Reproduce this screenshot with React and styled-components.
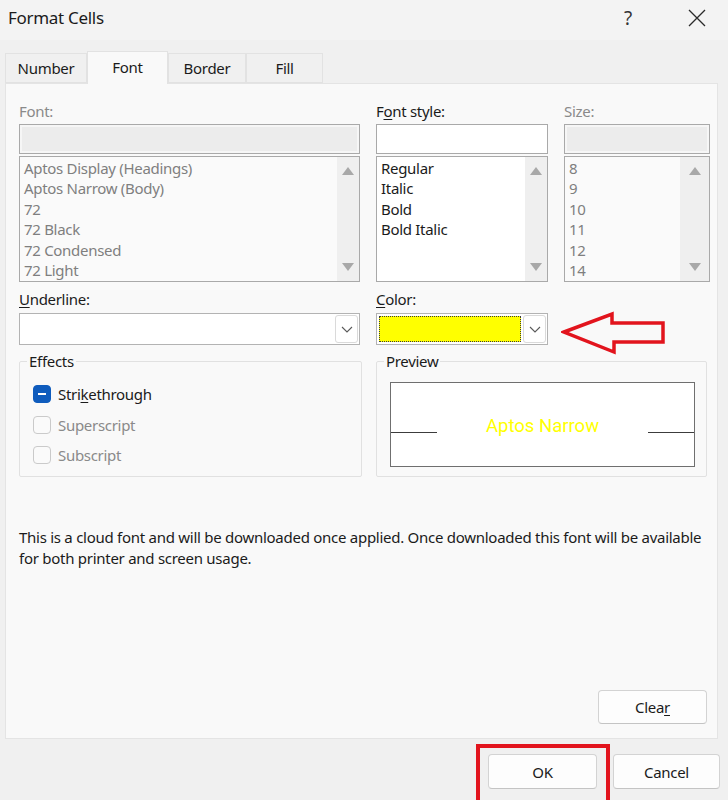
import styled, { createGlobalStyle } from "styled-components";

const GlobalStyle = createGlobalStyle`
  html, body {
    margin: 0;
    padding: 0;
    background: #f0f0f0;
  }
  body {
    font-family: "Noto Sans", "Open Sans", sans-serif;
    color: #1b1b1b;
  }
`;

const Dialog = styled.div`
  width: 728px;
  height: 800px;
  overflow: hidden;
  display: flex;
  flex-direction: column;
  background: #f0f0f0;
  font-size: 15px;
  letter-spacing: -0.3px;
`;

const TitleBar = styled.div`
  height: 40px;
  display: flex;
  align-items: flex-start;
  padding-left: 8px;
  background: #f3f3f3;
`;

const Title = styled.div`
  flex: 1;
  font-size: 17px;
  line-height: 24px;
  margin-top: 6px;
`;

const TitleButton = styled.div`
  width: 46px;
  height: 36px;
  display: flex;
  align-items: center;
  justify-content: center;
  font-size: 19px;
  color: #333;
  margin-right: ${(p) => p.$gap || 0}px;
`;

const TabStrip = styled.div`
  height: 43px;
  box-sizing: border-box;
  display: flex;
  align-items: flex-end;
  padding-left: 5px;
  position: relative;
  z-index: 1;
`;

const Tab = styled.div`
  width: ${(p) => p.$w}px;
  height: ${(p) => (p.$active ? 33 : 30)}px;
  box-sizing: border-box;
  display: flex;
  align-items: center;
  justify-content: center;
  padding-bottom: ${(p) => (p.$active ? 2 : 0)}px;
  background: ${(p) => (p.$active ? "#f9f9f9" : "#f0f0f0")};
  border: 1px solid #e2e2e2;
  border-bottom: ${(p) => (p.$active ? "none" : "1px solid #e2e2e2")};
  margin-bottom: ${(p) => (p.$active ? -1 : 0)}px;
  font-size: 15px;
`;

const Panel = styled.div`
  position: relative;
  flex: 1;
  margin: 0 10px 0 5px;
  background: #f9f9f9;
  border: 1px solid #e4e4e4;
  padding: 17px 8px 14px 13px;
  display: flex;
  flex-direction: column;
`;

const FormGrid = styled.div`
  display: grid;
  grid-template-columns: 341px 172px 146px;
  column-gap: 16px;
`;

const Label = styled.div`
  height: 20px;
  line-height: 20px;
  margin: ${(p) => (p.$top ? 7 : 0)}px 0 ${(p) => (p.$top ? 4 : 3)}px;
  color: ${(p) => (p.$disabled ? "#8a8a8a" : "#1b1b1b")};

  u {
    text-decoration-thickness: 1px;
    text-underline-offset: 2px;
  }
`;

const TextBox = styled.div`
  height: 30px;
  box-sizing: border-box;
  border: 1px solid #a9a9a9;
  background: ${(p) => (p.$disabled ? "#ececec" : "#ffffff")};
  box-shadow: ${(p) => (p.$disabled ? "inset 0 0 0 2px #f6f6f6" : "none")};
`;

const ListBox = styled.div`
  height: 126px;
  margin-top: 2px;
  box-sizing: border-box;
  border: 1px solid #a9a9a9;
  background: ${(p) => (p.$disabled ? "#fafafa" : "#ffffff")};
  display: flex;
  overflow: hidden;
`;

const ListItems = styled.div`
  flex: 1;
  padding: 1px 4px;
  color: ${(p) => (p.$disabled ? "#7f7f7f" : "#1b1b1b")};
`;

const ListItem = styled.div`
  height: 20.4px;
  line-height: 20.4px;
  white-space: nowrap;
`;

const ScrollTrack = styled.div`
  width: ${(p) => p.$w || 22}px;
  background: #efefef;
  display: flex;
  flex-direction: column;
  justify-content: space-between;
  align-items: center;
  padding: 10px 0;
`;

const Arrow = styled.span`
  width: 0;
  height: 0;
  border-left: 6px solid transparent;
  border-right: 6px solid transparent;
  border-${(p) => (p.$down ? "top" : "bottom")}: 8px solid #a8a8a8;
`;

const Combo = styled.div`
  height: 32px;
  box-sizing: border-box;
  border: 1px solid #b3b3b3;
  background: #ffffff;
  padding: 1px;
  display: flex;
  gap: 2px;
`;

const ComboValue = styled.div`
  flex: 1;
  background: ${(p) => p.$swatch || "transparent"};
  outline: ${(p) => (p.$swatch ? "1px dotted #3a3a3a" : "none")};
  outline-offset: -1px;
  margin: ${(p) => (p.$swatch ? "1px 0 1px 1px" : "0")};
`;

const DropButton = styled.div`
  width: 23px;
  box-sizing: border-box;
  border: 1px solid #dadada;
  border-radius: 3px;
  background: #ffffff;
  display: flex;
  align-items: center;
  justify-content: center;
`;

const Group = styled.fieldset`
  grid-column: ${(p) => p.$span || "auto"};
  margin: 6px ${(p) => p.$right || 0}px 0 0;
  width: ${(p) => p.$w || "auto"};
  box-sizing: border-box;
  height: 126px;
  border: 1px solid #e1e1e1;
  border-radius: 2px;
  padding: ${(p) => p.$pad};
  min-width: 0;

  legend {
    margin-left: -6px;
    padding: 0 2px;
    line-height: 20px;
    font-size: 15px;
  }
`;

const CheckRow = styled.div`
  height: 30.5px;
  display: flex;
  align-items: center;
  gap: 7px;
  color: ${(p) => (p.$disabled ? "#8a8a8a" : "#1b1b1b")};

  u {
    text-decoration-thickness: 1px;
    text-underline-offset: 2px;
  }
`;

const CheckBox = styled.span`
  width: 18px;
  height: 18px;
  box-sizing: border-box;
  border-radius: 4px;
  border: 1px solid ${(p) => (p.$checked ? "#0f5cbd" : "#cacaca")};
  background: ${(p) => (p.$checked ? "#0f5cbd" : "#fafafa")};
  display: flex;
  align-items: center;
  justify-content: center;

  &::after {
    content: "";
    display: ${(p) => (p.$checked ? "block" : "none")};
    width: 8px;
    height: 2px;
    background: #ffffff;
  }
`;

const PreviewBox = styled.div`
  height: 85px;
  box-sizing: border-box;
  border: 1px solid #6f6f6f;
  background: #ffffff;
  display: flex;
`;

const PreviewLine = styled.div`
  width: 46px;
  height: 1px;
  margin-top: 49px;
  background: #3c3c3c;
`;

const PreviewText = styled.div`
  flex: 1;
  display: flex;
  align-items: center;
  justify-content: center;
  padding-top: 2px;
  color: #ffff00;
  font-family: "Roboto", "Noto Sans", sans-serif;
  font-size: 18.5px;
  letter-spacing: 0;
`;

const Info = styled.div`
  margin-top: 50px;
  line-height: 21px;
  letter-spacing: -0.27px;

  span {
    display: block;
    white-space: nowrap;
  }
`;

const Button = styled.div`
  width: ${(p) => p.$w || 109}px;
  height: ${(p) => p.$h || 35}px;
  box-sizing: border-box;
  border: 1px solid #d3d3d3;
  border-bottom-color: #c4c4c4;
  border-radius: 4px;
  background: #fdfdfd;
  display: flex;
  align-items: center;
  justify-content: center;
  font-size: 15px;

  u {
    text-decoration-thickness: 1px;
    text-underline-offset: 2px;
  }
`;

const ClearButton = styled(Button)`
  align-self: flex-end;
  margin-top: auto;
  margin-right: 2px;
`;

const Footer = styled.div`
  height: 61px;
  flex-shrink: 0;
  box-sizing: border-box;
  padding: 5px 8px 0 0;
  display: flex;
  justify-content: flex-end;
  align-items: flex-start;
`;

const Highlight = styled.div`
  border: 4px solid #e2141d;
  padding: 6px 9px 20px 8px;
`;

const CancelButton = styled(Button)`
  margin: 10px 0 0 3px;
`;

const Annotation = styled.svg`
  position: absolute;
  left: 555px;
  top: 226px;
`;

function Chevron() {
  return (
    <svg width="12" height="7" viewBox="0 0 12 7">
      <path d="M1 1 L6 6 L11 1" fill="none" stroke="#5a5a5a" strokeWidth="1.1" />
    </svg>
  );
}

function List({ items, disabled, trackWidth }) {
  return (
    <ListBox $disabled={disabled}>
      <ListItems $disabled={disabled}>
        {items.map((item) => (
          <ListItem key={item}>{item}</ListItem>
        ))}
      </ListItems>
      <ScrollTrack $w={trackWidth}>
        <Arrow />
        <Arrow $down />
      </ScrollTrack>
    </ListBox>
  );
}

const fonts = [
  "Aptos Display (Headings)",
  "Aptos Narrow (Body)",
  "72",
  "72 Black",
  "72 Condensed",
  "72 Light",
];
const styles = ["Regular", "Italic", "Bold", "Bold Italic"];
const sizes = ["8", "9", "10", "11", "12", "14"];

export default function App() {
  return (
    <>
      <GlobalStyle />
      <Dialog>
        <TitleBar>
          <Title>Format Cells</Title>
          <TitleButton $gap={23}>?</TitleButton>
          <TitleButton $gap={8}>
            <svg width="18" height="18" viewBox="0 0 18 18">
              <path d="M1 1 L17 17 M17 1 L1 17" stroke="#2a2a2a" strokeWidth="1.3" />
            </svg>
          </TitleButton>
        </TitleBar>

        <TabStrip>
          <Tab $w={82}>Number</Tab>
          <Tab $w={81} $active>
            Font
          </Tab>
          <Tab $w={78}>Border</Tab>
          <Tab $w={77}>Fill</Tab>
        </TabStrip>

        <Panel>
          <FormGrid>
            <Label $disabled>Font:</Label>
            <Label>
              F<u>o</u>nt style:
            </Label>
            <Label $disabled>Size:</Label>

            <TextBox $disabled />
            <TextBox />
            <TextBox $disabled />

            <List items={fonts} disabled />
            <List items={styles} />
            <List items={sizes} disabled trackWidth={29} />

            <Label $top>
              <u>U</u>nderline:
            </Label>
            <Label $top>
              <u>C</u>olor:
            </Label>
            <div />

            <Combo>
              <ComboValue />
              <DropButton>
                <Chevron />
              </DropButton>
            </Combo>
            <Combo>
              <ComboValue $swatch="#ffff00" />
              <DropButton>
                <Chevron />
              </DropButton>
            </Combo>
            <div />

            <Group $w="343px" $pad="8px 0 0 13px">
              <legend>Effects</legend>
              <CheckRow>
                <CheckBox $checked />
                <span>
                  Stri<u>k</u>ethrough
                </span>
              </CheckRow>
              <CheckRow $disabled>
                <CheckBox />
                <span>Superscript</span>
              </CheckRow>
              <CheckRow $disabled>
                <CheckBox />
                <span>Subscript</span>
              </CheckRow>
            </Group>
            <Group $span="2 / 4" $right={3} $pad="11px 11px 8px 13px">
              <legend>Preview</legend>
              <PreviewBox>
                <PreviewLine />
                <PreviewText>Aptos Narrow</PreviewText>
                <PreviewLine />
              </PreviewBox>
            </Group>
          </FormGrid>

          <Info>
            <span>
              This is a cloud font and will be downloaded once applied. Once downloaded this font will be available
            </span>
            <span>for both printer and screen usage.</span>
          </Info>

          <ClearButton $h={34}>
            Clea<u>r</u>
          </ClearButton>

          <Annotation width="106" height="46" viewBox="0 0 106 46">
            <path
              d="M3 22 L51 4 L51 13 L102 13 L102 32 L53 32 L53 42 Z"
              fill="none"
              stroke="#e2141d"
              strokeWidth="3.5"
              strokeLinejoin="miter"
            />
          </Annotation>
        </Panel>

        <Footer>
          <Highlight>
            <Button>OK</Button>
          </Highlight>
          <CancelButton $w={107}>Cancel</CancelButton>
        </Footer>
      </Dialog>
    </>
  );
}
